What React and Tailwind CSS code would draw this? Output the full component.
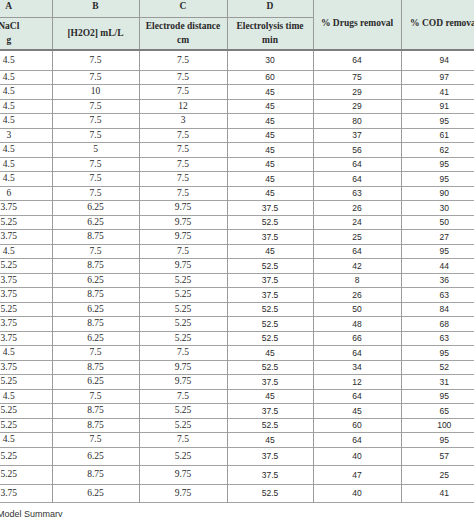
import React from 'react';

const rows = [
  ['4.5', '7.5', '7.5', '30', '64', '94'],
  ['4.5', '7.5', '7.5', '60', '75', '97'],
  ['4.5', '10', '7.5', '45', '29', '41'],
  ['4.5', '7.5', '12', '45', '29', '91'],
  ['4.5', '7.5', '3', '45', '80', '95'],
  ['3', '7.5', '7.5', '45', '37', '61'],
  ['4.5', '5', '7.5', '45', '56', '62'],
  ['4.5', '7.5', '7.5', '45', '64', '95'],
  ['4.5', '7.5', '7.5', '45', '64', '95'],
  ['6', '7.5', '7.5', '45', '63', '90'],
  ['3.75', '6.25', '9.75', '37.5', '26', '30'],
  ['5.25', '6.25', '9.75', '52.5', '24', '50'],
  ['3.75', '8.75', '9.75', '37.5', '25', '27'],
  ['4.5', '7.5', '7.5', '45', '64', '95'],
  ['5.25', '8.75', '9.75', '52.5', '42', '44'],
  ['3.75', '6.25', '5.25', '37.5', '8', '36'],
  ['3.75', '8.75', '5.25', '37.5', '26', '63'],
  ['5.25', '6.25', '5.25', '52.5', '50', '84'],
  ['3.75', '8.75', '5.25', '52.5', '48', '68'],
  ['3.75', '6.25', '5.25', '52.5', '66', '63'],
  ['4.5', '7.5', '7.5', '45', '64', '95'],
  ['3.75', '8.75', '9.75', '52.5', '34', '52'],
  ['5.25', '6.25', '9.75', '37.5', '12', '31'],
  ['4.5', '7.5', '7.5', '45', '64', '95'],
  ['5.25', '8.75', '5.25', '37.5', '45', '65'],
  ['5.25', '8.75', '5.25', '52.5', '60', '100'],
  ['4.5', '7.5', '7.5', '45', '64', '95'],
  ['5.25', '6.25', '5.25', '37.5', '40', '57'],
  ['5.25', '8.75', '9.75', '37.5', '47', '25'],
  ['3.75', '6.25', '9.75', '52.5', '40', '41'],
];

const rowHeight = (i) => {
  if (i === 0) return 'h-[20px]';
  if (i >= 27) return 'h-[18.5px]';
  return 'h-[14.5px]';
};

const serif = "font-['Liberation_Serif',serif]";
const sans = "font-['Liberation_Sans',Arial,sans-serif]";

export default function App() {
  return (
    <div className="w-[474px] h-[517px] overflow-hidden bg-white">
      <table className={`-ml-[34px] -mt-[4px] w-[521px] table-fixed border-collapse text-[#2a2a2a] ${serif}`}>
        <colgroup>
          <col className="w-[86px]" />
          <col className="w-[87px]" />
          <col className="w-[88px]" />
          <col className="w-[86px]" />
          <col className="w-[88px]" />
          <col className="w-[86px]" />
        </colgroup>
        <thead className="bg-[#dde9e3] text-[9.5px] font-bold leading-[14px]">
          <tr className="h-[21px]">
            <th className="border-r border-b border-[#9a9a9a] p-0">A</th>
            <th className="border-r border-b border-[#9a9a9a] p-0">B</th>
            <th className="border-r border-b border-[#9a9a9a] p-0">C</th>
            <th className="border-r border-b border-[#9a9a9a] p-0">D</th>
            <th rowSpan={2} className="border-r border-[#9a9a9a] p-0 align-middle">% Drugs removal</th>
            <th rowSpan={2} className="p-0 align-middle whitespace-nowrap">% COD removal</th>
          </tr>
          <tr className="h-[33px]">
            <th className="border-r border-[#9a9a9a] p-0">NaCl<br />g</th>
            <th className="border-r border-[#9a9a9a] p-0">[H2O2] mL/L</th>
            <th className="border-r border-[#9a9a9a] p-0">Electrode distance<br />cm</th>
            <th className="border-r border-[#9a9a9a] p-0">Electrolysis time<br />min</th>
          </tr>
        </thead>
        <tbody className="border-t-2 border-[#7d7d7d]">
          {rows.map((r, i) => (
            <tr key={i} className={`${rowHeight(i)} border-b border-[#a3a3a3]`}>
              {r.map((v, j) => (
                <td
                  key={j}
                  className={`p-0 text-center leading-none ${j < 5 ? 'border-r border-[#9a9a9a]' : ''} ${j < 3 ? `${serif} text-[9.5px]` : `${sans} text-[8.5px]`}`}
                >
                  {v}
                </td>
              ))}
            </tr>
          ))}
        </tbody>
      </table>
      <p className={`-ml-[3px] mt-[7px] text-[9px] leading-none text-[#333] ${sans}`}>Model Summary</p>
    </div>
  );
}
